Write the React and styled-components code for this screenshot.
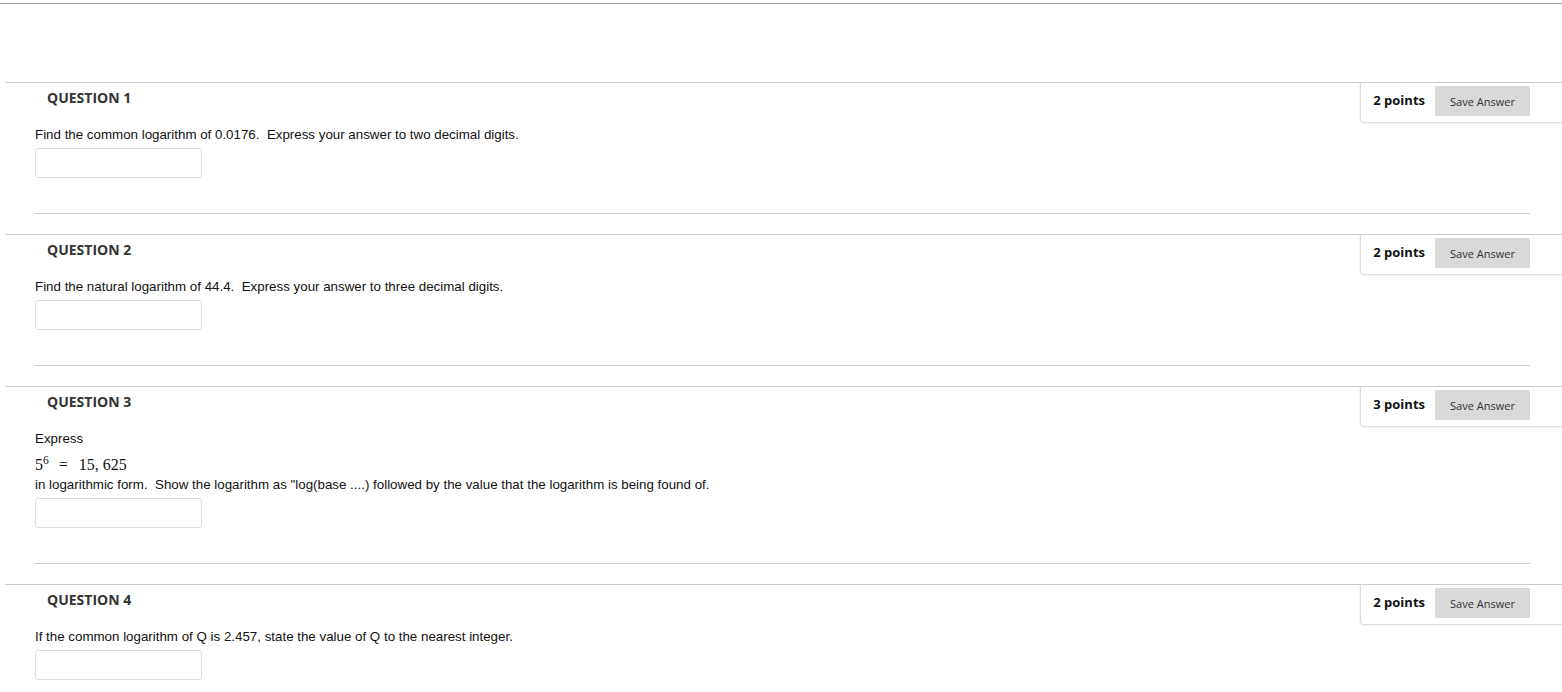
import React from 'react'
import styled, { createGlobalStyle } from 'styled-components'

const GlobalStyle = createGlobalStyle`
  html, body {
    margin: 0;
    padding: 0;
    background: #ffffff;
  }
  body {
    font-family: "Liberation Sans", Arial, sans-serif;
  }
`

const TopRule = styled.div`
  height: 1px;
  margin-top: 3px;
  background: #a8a8a8;
`

const List = styled.ol`
  list-style: none;
  margin: 0 0 0 5px;
  padding: 78px 0 0 0;
`

const Block = styled.li`
  border-top: 1px solid #cccccc;
  margin-bottom: 20px;
`

const Header = styled.div`
  display: flex;
  justify-content: space-between;
  align-items: flex-start;
`

const Title = styled.h3`
  margin: 0;
  padding: 6px 0 0 42px;
  font-family: "Open Sans", sans-serif;
  font-size: 14px;
  font-weight: 700;
  line-height: 18px;
  color: #333333;
`

const PointsBox = styled.div`
  display: flex;
  align-items: center;
  gap: 10px;
  padding: 3px 32px 6px 12px;
  border-left: 1px solid #dcdcdc;
  border-bottom: 1px solid #dcdcdc;
  border-bottom-left-radius: 4px;
  box-shadow: -1px 1px 1px rgba(0, 0, 0, 0.04);
`

const Points = styled.span`
  font-family: "Open Sans", sans-serif;
  font-size: 13px;
  font-weight: 700;
  line-height: 16px;
  margin-top: -2px;
  color: #111111;
`

const SaveButton = styled.button`
  width: 95px;
  height: 30px;
  border: none;
  border-radius: 2px;
  background: #d9d9d9;
  font-family: "Open Sans", sans-serif;
  font-size: 11px;
  color: #333333;
  padding: 0;
  cursor: pointer;
`

const Body = styled.div`
  padding: 4px 0 0 30px;
  margin-right: 32px;
`

const Prompt = styled.p`
  margin: 0;
  font-size: 13.33px;
  line-height: 16px;
  color: #111111;
  white-space: pre-wrap;
`

const MathLine = styled.div`
  margin: 8px 0 2px;
  font-family: "Liberation Serif", "Times New Roman", serif;
  font-size: 16px;
  line-height: 20px;
  color: #111111;
  white-space: pre;

  sup {
    font-size: 11.5px;
    vertical-align: 6px;
    line-height: 0;
  }
`

const Eq = styled.span`
  margin: 0 11px 0 10px;
`

const Comma = styled.span`
  margin-right: 4px;
`

const Answer = styled.input`
  display: block;
  box-sizing: border-box;
  width: 167px;
  height: 30px;
  margin-top: 5px;
  border: 1px solid #dedede;
  border-radius: 3px;
  background: #ffffff;
`

const Separator = styled.hr`
  margin: 35px 0 0;
  border: none;
  border-top: 1px solid #cccccc;
`

const questions = [
  {
    n: 1,
    points: 2,
    lines: ['Find the common logarithm of 0.0176.  Express your answer to two decimal digits.'],
  },
  {
    n: 2,
    points: 2,
    lines: ['Find the natural logarithm of 44.4.  Express your answer to three decimal digits.'],
  },
  {
    n: 3,
    points: 3,
    lines: [
      'Express',
      'math',
      'in logarithmic form.  Show the logarithm as "log(base ....) followed by the value that the logarithm is being found of.',
    ],
  },
  {
    n: 4,
    points: 2,
    lines: ['If the common logarithm of Q is 2.457, state the value of Q to the nearest integer.'],
  },
]

const Question = ({ n, points, lines }) => (
  <Block>
    <Header>
      <Title>QUESTION {n}</Title>
      <PointsBox>
        <Points>{points} points</Points>
        <SaveButton>Save Answer</SaveButton>
      </PointsBox>
    </Header>
    <Body>
      {lines.map((line, i) =>
        line === 'math' ? (
          <MathLine key={i}>
            5<sup>6</sup>
            <Eq>=</Eq>
            15<Comma>,</Comma>625
          </MathLine>
        ) : (
          <Prompt key={i}>{line}</Prompt>
        )
      )}
      <Answer type="text" />
      <Separator />
    </Body>
  </Block>
)

const App = () => (
  <>
    <GlobalStyle />
    <TopRule />
    <List>
      {questions.map((q) => (
        <Question key={q.n} {...q} />
      ))}
    </List>
  </>
)

export default App
